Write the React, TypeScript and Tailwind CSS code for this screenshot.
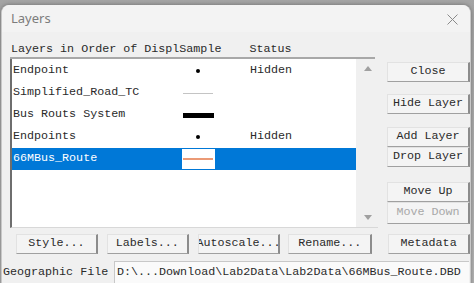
import React from "react";

const mono = { fontFamily: '"Liberation Mono", "DejaVu Sans Mono", monospace' };

type Layer = {
  name: string;
  sample: "dot" | "thin" | "thick" | "orange";
  status?: string;
  selected?: boolean;
};

const layers: Layer[] = [
  { name: "Endpoint", sample: "dot", status: "Hidden" },
  { name: "Simplified_Road_TC", sample: "thin" },
  { name: "Bus Routs System", sample: "thick" },
  { name: "Endpoints", sample: "dot", status: "Hidden" },
  { name: "66MBus_Route", sample: "orange", selected: true },
];

const Sample = ({ kind }: { kind: Layer["sample"] }) => {
  if (kind === "dot") return <div className="w-[4px] h-[4px] rounded-full bg-black" />;
  if (kind === "thin") return <div className="w-[30px] h-[1px] bg-[#c4c4c4]" />;
  if (kind === "thick") return <div className="w-[31px] h-[5px] bg-black" />;
  return (
    <div className="w-[33px] h-[20px] bg-white flex flex-col items-center pt-[9px]">
      <div className="w-[30px] h-[2px] bg-[#eb9a76]" />
    </div>
  );
};

const Btn = ({
  label,
  disabled,
  className = "",
}: {
  label: string;
  disabled?: boolean;
  className?: string;
}) => (
  <div
    className={`h-[20px] flex items-center justify-center overflow-hidden whitespace-nowrap bg-[#f4f4f4] border-t border-l border-t-[#e2e2e2] border-l-[#e2e2e2] border-r-2 border-b border-r-[#8c8c8c] border-b-[#a0a0a0] text-[11.7px] ${
      disabled ? "text-[#a8a8a8]" : "text-[#2a2a2a]"
    } ${className}`}
    style={mono}
  >
    {label}
  </div>
);

export default function App() {
  return (
    <div className="w-[474px] h-[283px] overflow-hidden bg-gradient-to-b from-[#a4a4a4] to-[#b4b4b4] pt-[5px]">
      <div className="ml-[1px] w-[470px] h-[290px] bg-[#f0f0f0] rounded-t-[8px] border-l border-r border-[#c8c8c8] shadow-[0_0_4px_rgba(0,0,0,0.35)]">
        {/* title bar */}
        <div className="h-[27px] flex items-center justify-between pl-[9px] pr-[12px] pt-[1px] bg-[#f3f3f3] rounded-t-[8px]">
          <span
            className="text-[13px] text-[#7c7c7c]"
            style={{ fontFamily: '"Noto Sans", "Open Sans", sans-serif' }}
          >
            Layers
          </span>
          <svg width="11" height="11" viewBox="0 0 11 11">
            <path d="M0.5 0.5 L10.5 10.5 M10.5 0.5 L0.5 10.5" stroke="#8a8a8a" strokeWidth="1" />
          </svg>
        </div>

        {/* main */}
        <div className="flex pt-[10px] pl-[8px]">
          <div className="w-[368px]">
            <div
              className="h-[17px] w-[365px] border-b-2 border-[#a8a8a8] text-[11.7px] leading-[15px] text-[#2a2a2a] whitespace-pre pl-[1px]"
              style={mono}
            >
              {"Layers in Order of DisplSample    Status"}
            </div>
            <div className="h-[169px] flex border-l-2 border-[#6e6e6e] border-b border-b-[#d8d8d8]">
              <div className="w-[344px] bg-white pt-[1px]">
                {layers.map((l, i) => (
                  <div
                    key={i}
                    className={`h-[22px] flex items-center text-[11.7px] ${
                      l.selected ? "bg-[#0078d7] text-white" : "text-[#2a2a2a]"
                    }`}
                    style={mono}
                  >
                    <span className="w-[169px] pl-[1px] whitespace-pre">{l.name}</span>
                    <div className="w-[34px] flex justify-center">
                      <Sample kind={l.sample} />
                    </div>
                    <span className="ml-[35px]">{l.status}</span>
                  </div>
                ))}
              </div>
              <div className="flex-1 bg-[#f0f0f0] flex flex-col items-center justify-between py-[7px] pl-[1px]">
                <svg width="8" height="5" viewBox="0 0 8 5">
                  <path d="M4 0 L8 5 L0 5 Z" fill="#a0a0a0" />
                </svg>
                <svg width="8" height="5" viewBox="0 0 8 5">
                  <path d="M0 0 L8 0 L4 5 Z" fill="#a0a0a0" />
                </svg>
              </div>
            </div>
          </div>

          <div className="ml-[9px] w-[83px] flex flex-col pt-[20px]">
            <Btn label="Close" />
            <Btn label="Hide Layer" className="mt-[12px]" />
            <Btn label="Add Layer" className="mt-[13px]" />
            <Btn label="Drop Layer" />
            <Btn label="Move Up" className="mt-[15px]" />
            <Btn label="Move Down" disabled className="h-[22px]" />
          </div>
        </div>

        {/* bottom buttons */}
        <div className="flex mt-[6px] pl-[14px]">
          <Btn label="Style..." className="w-[82px]" />
          <Btn label="Labels..." className="w-[82px] ml-[9px]" />
          <Btn label="Autoscale..." className="w-[83px] ml-[9px]" />
          <Btn label="Rename..." className="w-[84px] ml-[8px]" />
          <Btn label="Metadata" className="w-[82px] ml-[16px]" />
        </div>

        {/* geographic file */}
        <div className="flex items-center mt-[7px] h-[23px]">
          <span className="pl-[1px] w-[112px] text-[11.7px] text-[#2a2a2a] whitespace-pre" style={mono}>
            Geographic File
          </span>
          <div
            className="flex-1 h-[23px] bg-[#fafafa] border-l border-t border-[#c8c8c8] flex items-center pl-[2px] text-[11.7px] text-[#2a2a2a] whitespace-pre mr-[1px]"
            style={mono}
          >
            {"D:\\...Download\\Lab2Data\\Lab2Data\\66MBus_Route.DBD"}
          </div>
        </div>
      </div>
    </div>
  );
}
